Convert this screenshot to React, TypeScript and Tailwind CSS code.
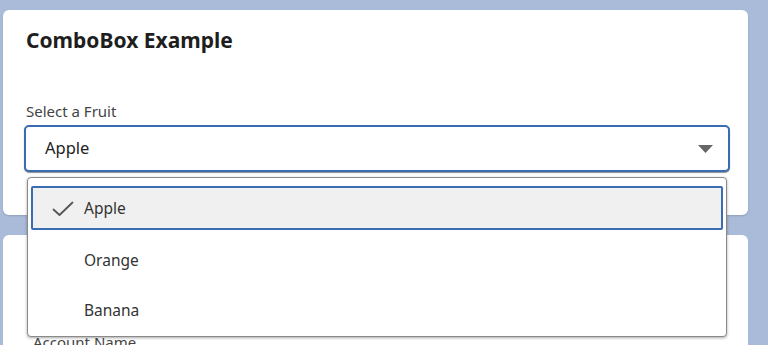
const fruits = ["Apple", "Orange", "Banana"];

const CheckIcon = () => (
  <svg width="22" height="16" viewBox="0 0 22 16" fill="none">
    <path
      d="M1.5 8.5 L7.5 14 L20.5 1.5"
      stroke="#555"
      strokeWidth="1.8"
      strokeLinecap="round"
      strokeLinejoin="round"
    />
  </svg>
);

const ComboBox = () => {
  const selected = "Apple";

  return (
    <div className="relative">
      <div className="flex h-[47px] items-center justify-between rounded-[5px] border-2 border-[#3a6cb4] bg-white pl-[19px] pr-[15px] shadow-[0_1px_1px_rgba(0,0,0,0.45)]">
        <span className="text-[16.5px] text-[#222]">{selected}</span>
        <svg width="15" height="8" viewBox="0 0 15 8">
          <path d="M0 0 H15 L7.5 8 Z" fill="#666" />
        </svg>
      </div>

      <ul className="absolute left-[3px] right-[3px] top-[52px] z-10 rounded-[4px] border border-[#8a8a8a] bg-white pb-[2px] pl-[3px] pr-[3px] pt-[8px] shadow-[0_1px_3px_rgba(0,0,0,0.35)]">
        {fruits.map((fruit, i) =>
          fruit === selected ? (
            <li
              key={i}
              className="mb-[4px] flex h-[44px] items-center rounded-[2px] border-2 border-[#3a6cb4] bg-[#f0f0f0] pl-[19px] pt-[2px]"
            >
              <CheckIcon />
              <span className="ml-[10px] text-[15.5px] text-[#333]">{fruit}</span>
            </li>
          ) : (
            <li key={i} className="flex h-[50px] items-center pl-[53px] pt-[4px]">
              <span className="text-[15.5px] text-[#333]">{fruit}</span>
            </li>
          )
        )}
      </ul>
    </div>
  );
};

export default function App() {
  return (
    <div
      className="h-[353px] w-[768px] overflow-hidden bg-white"
      style={{ fontFamily: '"Noto Sans", "Open Sans", sans-serif' }}
    >
      <div className="flex h-[345px] flex-col gap-[20px] overflow-hidden bg-[#aabbd9] pl-[3px] pr-[20px] pt-[10px]">
        <div className="h-[205px] shrink-0 rounded-[6px] bg-white pl-[21px] pr-[18px] pt-[16px] shadow-[0_1px_2px_rgba(0,0,0,0.15)]">
          <h2 className="pl-[2px] text-[21px] font-bold leading-[28px] text-[#1e1e1e]">
            ComboBox Example
          </h2>
          <label className="mt-[47px] block pl-[2px] text-[15px] leading-[20px] text-[#444]">
            Select a Fruit
          </label>
          <div className="mt-[4px]">
            <ComboBox />
          </div>
        </div>

        <div className="flex-1 rounded-[6px] bg-white pl-[30px] pt-[97px]">
          <p className="text-[15px] leading-[20px] text-[#444]">Account Name</p>
        </div>
      </div>
    </div>
  );
}
